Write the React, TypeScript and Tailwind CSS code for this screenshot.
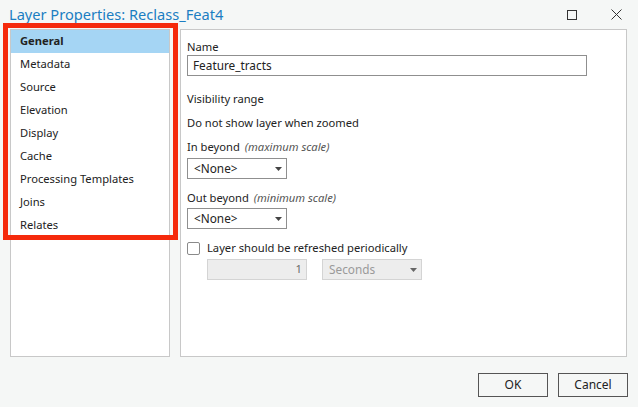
import React from 'react';

const PAGES = [
  'General',
  'Metadata',
  'Source',
  'Elevation',
  'Display',
  'Cache',
  'Processing Templates',
  'Joins',
  'Relates',
];

const Caret = ({ muted }: { muted?: boolean }) => (
  <svg width="7" height="4" viewBox="0 0 7 4" className={muted ? 'fill-[#666]' : 'fill-[#444]'}>
    <path d="M0 0h7L3.5 4z" />
  </svg>
);

const Select = ({ value, disabled }: { value: string; disabled?: boolean }) => (
  <div
    className={`flex items-center justify-between w-[100px] h-[21px] pl-[6px] pr-[4px] border ${
      disabled ? 'bg-[#ededed] border-[#d4d4d4] text-[#9a9a9a]' : 'bg-white border-[#8f8f8f] text-[#222]'
    }`}
  >
    <span className="text-[11.8px]">{value}</span>
    <Caret muted={disabled} />
  </div>
);

export default function App() {
  return (
    <div
      className="relative w-[638px] h-[407px] bg-[#f5f7f6] flex flex-col text-[11.2px] text-[#222] overflow-hidden"
      style={{ fontFamily: '"Noto Sans", "Open Sans", sans-serif' }}
    >
      {/* Title bar */}
      <div className="h-[29px] flex items-center pl-[9px] pr-[16px]">
        <span className="text-[14.6px] text-[#1b7ec2] leading-none">Layer Properties: Reclass_Feat4</span>
        <div className="ml-auto flex items-center gap-[34px]">
          <div className="w-[10px] h-[10px] border border-[#333]" />
          <svg width="11" height="11" viewBox="0 0 11 11" className="stroke-[#333]">
            <path d="M0.5 0.5l10 10M10.5 0.5l-10 10" strokeWidth="1" />
          </svg>
        </div>
      </div>

      {/* Body */}
      <div className="flex gap-[10px] pl-[10px] pr-[11px] h-[328px]">
        <div className="w-[160px] h-full bg-white border border-[#c8c8c8]">
          {PAGES.map((p, i) => (
            <div
              key={p}
              className={`h-[23px] flex items-center pl-[9px] ${i === 0 ? 'bg-[#a5d5f4] font-bold' : ''}`}
            >
              {p}
            </div>
          ))}
        </div>

        <div className="flex-1 h-full bg-white border border-[#c8c8c8] pl-[6px] pt-[9px]">
          <div className="leading-[16px]">Name</div>
          <div className="w-[400px] h-[21px] border border-[#8f8f8f] flex items-center pl-[5px] text-[11.8px]">
            Feature_tracts
          </div>

          <div className="leading-[16px] mt-[15px]">Visibility range</div>
          <div className="leading-[16px] mt-[8px]">Do not show layer when zoomed</div>

          <div className="leading-[16px] mt-[8px]">
            In beyond <i className="text-[#555] pl-[2px]">(maximum scale)</i>
          </div>
          <div className="mt-[3px]">
            <Select value="<None>" />
          </div>

          <div className="leading-[16px] mt-[11px]">
            Out beyond <i className="text-[#555] pl-[2px]">(minimum scale)</i>
          </div>
          <div className="mt-[2px]">
            <Select value="<None>" />
          </div>

          <div className="flex items-center gap-[7px] leading-[16px] mt-[11px]">
            <div className="w-[13px] h-[13px] border border-[#8a8a8a] rounded-[2px] bg-white" />
            <span>Layer should be refreshed periodically</span>
          </div>
          <div className="flex gap-[15px] mt-[3px] ml-[20px]">
            <div className="w-[100px] h-[21px] bg-[#ededed] border border-[#d4d4d4] text-[#6a6a6a] flex items-center justify-end pr-[4px]">
              1
            </div>
            <Select value="Seconds" disabled />
          </div>
        </div>
      </div>

      {/* Footer */}
      <div className="flex justify-end gap-[10px] pr-[10px] mt-[16px]">
        <button className="w-[70px] h-[24px] border border-[#555] bg-[#f5f7f6] text-[12px]">OK</button>
        <button className="w-[70px] h-[24px] border border-[#555] bg-[#f5f7f6] text-[12px]">Cancel</button>
      </div>

      {/* Annotation highlight */}
      <div className="absolute left-[3px] top-[23px] w-[175px] h-[217px] border-[5px] border-[#f52a0c] pointer-events-none" />
    </div>
  );
}
